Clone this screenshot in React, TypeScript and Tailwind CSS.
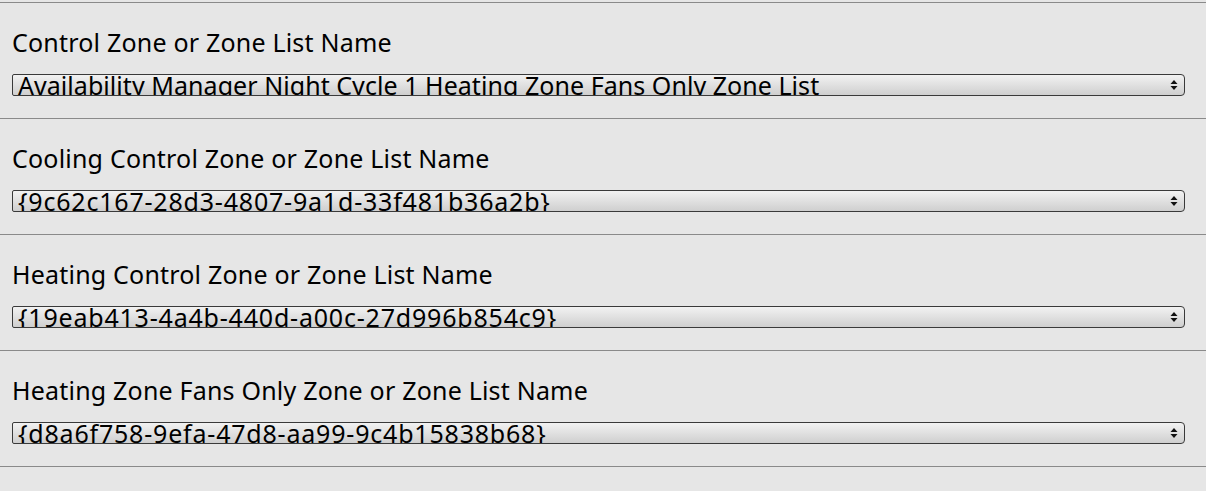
import React from 'react'

const fields = [
    { label: 'Control Zone or Zone List Name', value: 'Availability Manager Night Cycle 1 Heating Zone Fans Only Zone List', handle: false },
    { label: 'Cooling Control Zone or Zone List Name', value: '{9c62c167-28d3-4807-9a1d-33f481b36a2b}', handle: true },
    { label: 'Heating Control Zone or Zone List Name', value: '{19eab413-4a4b-440d-a00c-27d996b854c9}', handle: true },
    { label: 'Heating Zone Fans Only Zone or Zone List Name', value: '{d8a6f758-9efa-47d8-aa99-9c4b15838b68}', handle: true },
]

function SelectArrows() {
    return (
        <svg width="8" height="12" viewBox="0 0 8 12" className="shrink-0">
            <path d="M4 1 L7.5 5 L0.5 5 Z" fill="#111" />
            <path d="M4 11 L7.5 7 L0.5 7 Z" fill="#111" />
        </svg>
    )
}

function Field({ label, value, handle }: { label: string; value: string; handle: boolean }) {
    return (
        <div className="h-[116px] border-t border-[#8a8a8a] pl-3 pr-[21px] pt-[25px]">
            <div className="text-[25px] leading-[28px] tracking-[0.2px] text-black">{label}</div>
            <div className="mt-[18px] flex h-[22px] items-start overflow-hidden rounded-l-[2px] rounded-r-[4px] border border-[#3a3a3a] bg-gradient-to-b from-[#f2f2f2] to-[#cfcfcf] pr-[6px]">
                <div className={`min-w-0 flex-1 overflow-hidden whitespace-nowrap pl-[5px] text-[25px] leading-[21px] text-black ${handle ? 'tracking-[0.8px]' : 'tracking-[0.05px]'}`}>
                    {value}
                </div>
                <div className="flex h-full items-center">
                    <SelectArrows />
                </div>
            </div>
        </div>
    )
}

export default function App() {
    return (
        <div className="h-[491px] w-[1206px] overflow-hidden bg-[#e6e6e6] pt-[2px] font-['Noto_Sans',sans-serif]">
            {fields.map((f) => (
                <Field key={f.label} label={f.label} value={f.value} handle={f.handle} />
            ))}
            <div className="border-t border-[#8a8a8a]" />
        </div>
    )
}
